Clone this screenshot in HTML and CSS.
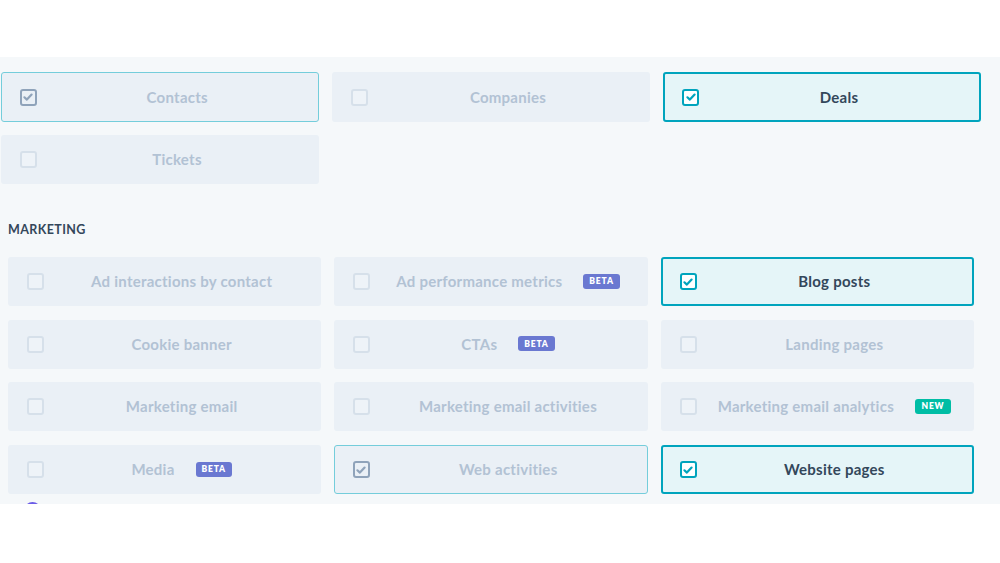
FILE: index.html
```html
<!DOCTYPE html>
<html>
<head>
<meta charset="utf-8">
<link rel="stylesheet" href="styles.css">
</head>
<body>
<div class="top-strip"></div>
<div class="panel">
  <div class="objects">
    <div class="card checked-disabled">
      <span class="cb cb-grey"><svg viewBox="0 0 12 12"><path d="M2.4 6.3 L4.9 8.6 L9.6 3.6"/></svg></span>
      <span class="label"><span class="txt">Contacts</span></span>
    </div>
    <div class="card">
      <span class="cb"></span>
      <span class="label"><span class="txt">Companies</span></span>
    </div>
    <div class="card active">
      <span class="cb cb-teal"><svg viewBox="0 0 12 12"><path d="M2.4 6.3 L4.9 8.6 L9.6 3.6"/></svg></span>
      <span class="label"><span class="txt">Deals</span></span>
    </div>
    <div class="card">
      <span class="cb"></span>
      <span class="label"><span class="txt">Tickets</span></span>
    </div>
  </div>

  <div class="marketing">
    <h3 class="heading">MARKETING</h3>
    <div class="grid">
      <div class="card">
        <span class="cb"></span>
        <span class="label"><span class="txt">Ad interactions by contact</span></span>
      </div>
      <div class="card">
        <span class="cb"></span>
        <span class="label"><span class="txt">Ad performance metrics</span><span class="badge beta">BETA</span></span>
      </div>
      <div class="card active">
        <span class="cb cb-teal"><svg viewBox="0 0 12 12"><path d="M2.4 6.3 L4.9 8.6 L9.6 3.6"/></svg></span>
        <span class="label"><span class="txt">Blog posts</span></span>
      </div>

      <div class="card">
        <span class="cb"></span>
        <span class="label"><span class="txt">Cookie banner</span></span>
      </div>
      <div class="card">
        <span class="cb"></span>
        <span class="label"><span class="txt">CTAs</span><span class="badge beta">BETA</span></span>
      </div>
      <div class="card">
        <span class="cb"></span>
        <span class="label"><span class="txt">Landing pages</span></span>
      </div>

      <div class="card">
        <span class="cb"></span>
        <span class="label"><span class="txt">Marketing email</span></span>
      </div>
      <div class="card">
        <span class="cb"></span>
        <span class="label"><span class="txt">Marketing email activities</span></span>
      </div>
      <div class="card">
        <span class="cb"></span>
        <span class="label"><span class="txt">Marketing email analytics</span><span class="badge new">NEW</span></span>
      </div>

      <div class="card">
        <span class="cb"></span>
        <span class="label"><span class="txt">Media</span><span class="badge beta">BETA</span></span>
      </div>
      <div class="card checked-disabled">
        <span class="cb cb-grey"><svg viewBox="0 0 12 12"><path d="M2.4 6.3 L4.9 8.6 L9.6 3.6"/></svg></span>
        <span class="label"><span class="txt">Web activities</span></span>
      </div>
      <div class="card active">
        <span class="cb cb-teal"><svg viewBox="0 0 12 12"><path d="M2.4 6.3 L4.9 8.6 L9.6 3.6"/></svg></span>
        <span class="label"><span class="txt">Website pages</span></span>
      </div>
    </div>
    <div class="dot"></div>
  </div>
</div>
</body>
</html>
```

FILE: styles.css
```css
* { box-sizing: border-box; }
html, body { margin: 0; padding: 0; background: #ffffff; }
body { font-family: Lato, "Open Sans", "Liberation Sans", sans-serif; width: 1000px; height: 563px; overflow: hidden; }

.top-strip { height: 57px; background: #ffffff; }

.panel {
  height: 447px;
  background: #f5f8fa;
  overflow: hidden;
  padding: 15px 0 0 1px;
}

.objects {
  width: 980px;
  display: grid;
  grid-template-columns: repeat(3, 1fr);
  column-gap: 13px;
  row-gap: 13px;
  grid-auto-rows: 50px;
}
.objects .card:nth-child(4) { height: 49px; }

.marketing { padding-left: 7px; }

.heading {
  margin: 37px 0 19px 0;
  font-size: 12.5px;
  line-height: 16px;
  font-weight: 700;
  color: #33475b;
  letter-spacing: 0.4px;
}

.grid {
  width: 966px;
  display: grid;
  grid-template-columns: repeat(3, 1fr);
  column-gap: 13px;
  row-gap: 13.7px;
  grid-auto-rows: 49px;
}

.card {
  display: flex;
  align-items: center;
  background: #eaf0f6;
  border: 2px solid transparent;
  border-radius: 3px;
  padding-left: 17px;
}
.card.checked-disabled { border: 1.5px solid #74cddb; padding-left: 17.5px; }
.card.active { background: #e5f5f8; border-color: #00a4bd; }

.cb {
  width: 17px;
  height: 17px;
  flex: none;
  border: 2px solid #d6e0ea;
  border-radius: 3px;
  background: #eef3f8;
  display: flex;
  align-items: center;
  justify-content: center;
}
.cb svg { width: 12px; height: 12px; fill: none; stroke-width: 2.2; stroke-linecap: round; stroke-linejoin: round; }
.cb-grey { border-color: #8fa3ba; background: #eaf0f6; }
.cb-grey svg { stroke: #8fa3ba; }
.cb-teal { border-color: #00a4bd; background: #ffffff; }
.cb-teal svg { stroke: #00a4bd; }

.label {
  flex: 1;
  display: flex;
  align-items: center;
  justify-content: center;
  gap: 21px;
  padding-bottom: 1px;
}
.txt {
  font-size: 15px;
  font-weight: 700;
  color: #b2c2d4;
  letter-spacing: 0.25px;
}
.active .txt { color: #33475b; }

.badge {
  display: inline-flex;
  align-items: center;
  justify-content: center;
  height: 15px;
  padding: 0 6px;
  border-radius: 3px;
  font-size: 8.5px;
  font-weight: 800;
  letter-spacing: 0.8px;
  color: #ffffff;
  min-width: 36px;
}
.badge.beta { background: #6a78d1; }
.badge.new { background: #00bda5; }

.dot {
  margin: 8px 0 0 16px;
  width: 17px;
  height: 17px;
  border-radius: 50%;
  background: #6b5ce7;
}
```
